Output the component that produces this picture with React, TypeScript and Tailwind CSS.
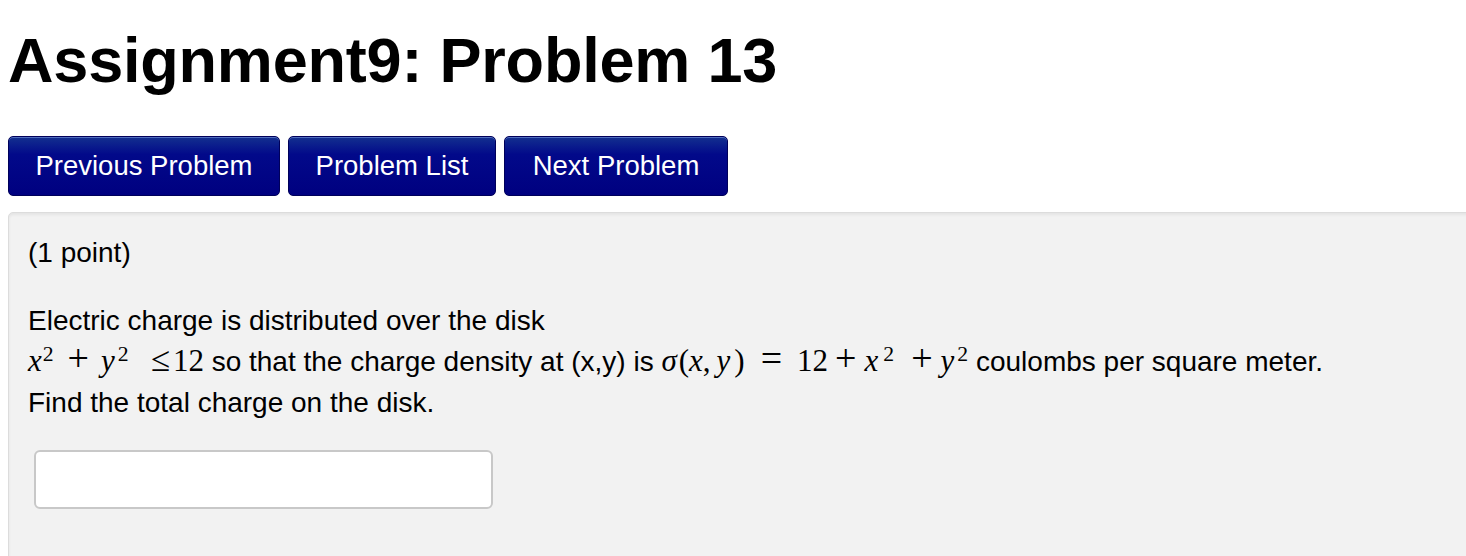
import React from "react";

const serif = { fontFamily: '"Liberation Serif", "Times New Roman", serif' };

function Sup({ children, className = "" }: { children: React.ReactNode; className?: string }) {
  return (
    <span className={"relative top-[-0.45em] text-[0.7em] not-italic leading-[0] " + className}>{children}</span>
  );
}

function V({ children, className = "" }: { children: React.ReactNode; className?: string }) {
  return <span className={"italic " + className}>{children}</span>;
}

function Op({ children, className = "" }: { children: React.ReactNode; className?: string }) {
  return <span className={"text-[38px] leading-[0] " + className}>{children}</span>;
}

function M({ children }: { children: React.ReactNode }) {
  return (
    <span className="text-[31px] leading-none whitespace-nowrap" style={serif}>
      {children}
    </span>
  );
}

function Btn({ children, className = "" }: { children: React.ReactNode; className?: string }) {
  return (
    <button
      className={
        "h-[60px] rounded-[5px] border border-[#00005a] bg-[linear-gradient(#13308f_0%,#02098a_30%,#000080_100%)] text-white text-[27.5px] leading-none text-center shadow-[inset_0_1px_0_rgba(120,150,220,0.6)] " +
        className
      }
    >
      {children}
    </button>
  );
}

export default function App() {
  return (
    <div
      className="w-[1466px] h-[556px] overflow-hidden bg-white text-black pl-2"
      style={{ fontFamily: '"Liberation Sans", Arial, Helvetica, sans-serif' }}
    >
      <h1 className="pt-[25px] text-[63px] leading-[70px] font-bold tracking-[-0.2px]">
        Assignment9: Problem 13
      </h1>
      <div className="mt-[41px] flex gap-2">
        <Btn className="w-[272px]">Previous Problem</Btn>
        <Btn className="w-[208px]">Problem List</Btn>
        <Btn className="w-[224px]">Next Problem</Btn>
      </div>
      <div className="mt-4 w-[1480px] h-[360px] rounded-[5px] border border-[#dcdcdc] bg-[#f2f2f2] pt-[19px] pl-[19px] text-[28px] leading-[41px] shadow-[inset_0_2px_3px_rgba(0,0,0,0.06)]">
        <p>(1 point)</p>
        <p className="mt-[27px]">
          Electric charge is distributed over the disk
          <br />
          <M>
            <V>x</V>
            <Sup className="ml-[1px]">2</Sup>
            <Op className="ml-[14px]">+</Op>
            <V className="ml-[12px]">y</V>
            <Sup className="ml-[3px]">2</Sup>
            <span className="ml-[22px] text-[35px] leading-[0]">≤</span>
            <span className="ml-[3px]">12</span>
          </M>{" "}
          so that the charge density at (x,y) is{" "}
          <M>
            <V>σ</V>
            <span className="ml-[2px]">(</span>
            <V>x</V>
            <span>,</span>
            <V className="ml-[6px]">y</V>
            <span className="ml-[4px]">)</span>
            <Op className="ml-[16px]">=</Op>
            <span className="ml-[15px]">12</span>
            <Op className="ml-[7px]">+</Op>
            <V className="ml-[8px]">x</V>
            <Sup className="ml-[5px]">2</Sup>
            <Op className="ml-[17px]">+</Op>
            <V className="ml-[8px]">y</V>
            <Sup className="ml-[3px]">2</Sup>
          </M>{" "}
          coulombs per square meter.
          <br />
          Find the total charge on the disk.
        </p>
        <input
          type="text"
          className="mt-[27px] ml-[6px] block w-[459px] h-[59px] rounded-[6px] border-2 border-[#c8c8c8] bg-white"
        />
      </div>
    </div>
  );
}
